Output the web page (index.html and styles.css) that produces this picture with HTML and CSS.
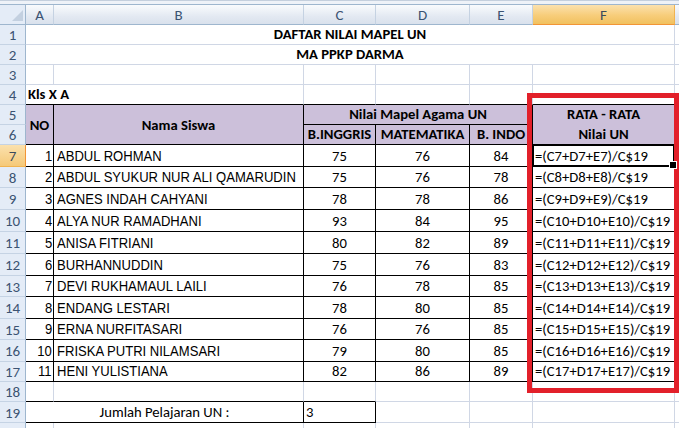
FILE: index.html
```html
<!DOCTYPE html>
<html>
<head>
<meta charset="utf-8">
<link rel="stylesheet" href="styles.css">
</head>
<body>
<div class="sheet">
  <div class="topbar"></div>
  <div class="grid">
    <div class="ch corner"><svg width="11" height="11" viewBox="0 0 11 11"><polygon points="11,0 11,11 0,11" fill="#c3d0e0"/></svg></div>
    <div class="ch">A</div>
    <div class="ch">B</div>
    <div class="ch">C</div>
    <div class="ch">D</div>
    <div class="ch">E</div>
    <div class="ch selh">F</div>
    <div class="ch last"></div>

    <div class="rh">1</div>
    <div class="c s6 title">DAFTAR NILAI MAPEL UN</div>
    <div class="c g"></div>

    <div class="rh">2</div>
    <div class="c s6 title">MA PPKP DARMA</div>
    <div class="c g"></div>

    <div class="rh">3</div>
    <div class="c"></div><div class="c"></div><div class="c"></div><div class="c"></div><div class="c"></div><div class="c"></div><div class="c g"></div>

    <div class="rh">4</div>
    <div class="c s2 kb bold">Kls X A</div>
    <div class="c kb"></div><div class="c kb"></div><div class="c kb"></div><div class="c kb"></div><div class="c g"></div>

    <div class="rh">5</div>
    <div class="c hd k r2">NO</div>
    <div class="c hd k r2">Nama Siswa</div>
    <div class="c hd k s3 sub">Nilai Mapel Agama UN</div>
    <div class="c hd kr sub nb">RATA - RATA</div>
    <div class="c g"></div>

    <div class="rh">6</div>
    <div class="c hd k sub2">B.INGGRIS</div>
    <div class="c hd k sub2">MATEMATIKA</div>
    <div class="c hd k sub2">B. INDO</div>
    <div class="c hd k sub2">Nilai UN</div>
    <div class="c g"></div>

    <div class="rh selr">7</div>
    <div class="c k no"><span>1</span></div><div class="c k nm"><span>ABDUL ROHMAN</span></div>
    <div class="c k num">75</div><div class="c k num">76</div><div class="c k num">84</div>
    <div class="c k fx active">=(C7+D7+E7)/C$19</div><div class="c g"></div>

    <div class="rh">8</div>
    <div class="c k no"><span>2</span></div><div class="c k nm"><span>ABDUL SYUKUR NUR ALI QAMARUDIN</span></div>
    <div class="c k num">75</div><div class="c k num">76</div><div class="c k num">78</div>
    <div class="c k fx">=(C8+D8+E8)/C$19</div><div class="c g"></div>

    <div class="rh">9</div>
    <div class="c k no"><span>3</span></div><div class="c k nm"><span>AGNES INDAH CAHYANI</span></div>
    <div class="c k num">78</div><div class="c k num">78</div><div class="c k num">86</div>
    <div class="c k fx">=(C9+D9+E9)/C$19</div><div class="c g"></div>

    <div class="rh">10</div>
    <div class="c k no"><span>4</span></div><div class="c k nm"><span>ALYA NUR RAMADHANI</span></div>
    <div class="c k num">93</div><div class="c k num">84</div><div class="c k num">95</div>
    <div class="c k fx">=(C10+D10+E10)/C$19</div><div class="c g"></div>

    <div class="rh">11</div>
    <div class="c k no"><span>5</span></div><div class="c k nm"><span>ANISA FITRIANI</span></div>
    <div class="c k num">80</div><div class="c k num">82</div><div class="c k num">89</div>
    <div class="c k fx">=(C11+D11+E11)/C$19</div><div class="c g"></div>

    <div class="rh">12</div>
    <div class="c k no"><span>6</span></div><div class="c k nm"><span>BURHANNUDDIN</span></div>
    <div class="c k num">75</div><div class="c k num">76</div><div class="c k num">83</div>
    <div class="c k fx">=(C12+D12+E12)/C$19</div><div class="c g"></div>

    <div class="rh">13</div>
    <div class="c k no"><span>7</span></div><div class="c k nm"><span>DEVI RUKHAMAUL LAILI</span></div>
    <div class="c k num">76</div><div class="c k num">78</div><div class="c k num">85</div>
    <div class="c k fx">=(C13+D13+E13)/C$19</div><div class="c g"></div>

    <div class="rh">14</div>
    <div class="c k no"><span>8</span></div><div class="c k nm"><span>ENDANG LESTARI</span></div>
    <div class="c k num">78</div><div class="c k num">80</div><div class="c k num">85</div>
    <div class="c k fx">=(C14+D14+E14)/C$19</div><div class="c g"></div>

    <div class="rh">15</div>
    <div class="c k no"><span>9</span></div><div class="c k nm"><span>ERNA NURFITASARI</span></div>
    <div class="c k num">76</div><div class="c k num">76</div><div class="c k num">85</div>
    <div class="c k fx">=(C15+D15+E15)/C$19</div><div class="c g"></div>

    <div class="rh">16</div>
    <div class="c k no"><span>10</span></div><div class="c k nm"><span>FRISKA PUTRI NILAMSARI</span></div>
    <div class="c k num">79</div><div class="c k num">80</div><div class="c k num">85</div>
    <div class="c k fx">=(C16+D16+E16)/C$19</div><div class="c g"></div>

    <div class="rh">17</div>
    <div class="c k no"><span>11</span></div><div class="c k nm"><span>HENI YULISTIANA</span></div>
    <div class="c k num">82</div><div class="c k num">86</div><div class="c k num">89</div>
    <div class="c k fx">=(C17+D17+E17)/C$19</div><div class="c g"></div>

    <div class="rh">18</div>
    <div class="c kb"></div><div class="c kb"></div><div class="c kb"></div><div class="c"></div><div class="c"></div><div class="c"></div><div class="c g"></div>

    <div class="rh">19</div>
    <div class="c s2 k lbl">Jumlah Pelajaran UN :</div>
    <div class="c k val">3</div>
    <div class="c"></div><div class="c"></div><div class="c"></div><div class="c g"></div>

    <div class="rh"></div>
    <div class="c"></div><div class="c"></div><div class="c"></div><div class="c"></div><div class="c"></div><div class="c"></div><div class="c g"></div>
  </div>
  <div class="redbox"></div>
</div>
</body>
</html>
```

FILE: styles.css
```css
* { box-sizing: border-box; margin: 0; padding: 0; }
html, body { width: 679px; height: 428px; overflow: hidden; background: #fff; }
body { font-family: Carlito, Calibri, Lato, "Liberation Sans", sans-serif; font-size: 14.67px; color: #000; }

.sheet { position: relative; width: 679px; }

.topbar { height: 5px; background: #eef2f8; border-top: 1px solid #c4cfdd; border-bottom: 1px solid #9eb6ce; }

.grid {
  display: grid;
  grid-template-columns: 26px 28px 250px 72px 94px 63px 142px 4px;
  grid-template-rows: 20px 20px 20px 20px 20px 20px 20px 22px 21px 22px 22px 22px 22px 21px 22px 21px 22px 20px 20px 21px 20px;
}

.c {
  display: flex;
  align-items: flex-end;
  border-right: 1px solid #d0d7e5;
  border-bottom: 1px solid #d0d7e5;
  padding: 0 2px 2px 2px;
  line-height: 16px;
  white-space: nowrap;
  overflow: hidden;
}
.c.g { border-right: none; }

.ch {
  display: flex;
  align-items: center;
  justify-content: center;
  background: linear-gradient(#f9fbfd, #e3e9f2 60%, #d9e1ec);
  border-right: 1px solid #c5d2e2;
  border-bottom: 1px solid #9eb6ce;
  color: #3b5372;
  font-size: 15px;
}
.ch.corner { justify-content: flex-end; align-items: flex-end; padding: 0 2px 3px 0; background: #e4ecf7; border-right: 1px solid #9eb6ce; }
.ch.selh { background: linear-gradient(#fbe1ae, #f7cd7a 55%, #f1c15f); border-bottom-color: #f29536; border-right-color: #f0b350; color: #3b4a5c; }
.ch.last { border-right: none; }

.rh {
  display: flex;
  align-items: center;
  justify-content: center;
  background: #e4ecf7;
  border-right: 1px solid #9eb6ce;
  border-bottom: 1px solid #c5d3e4;
  color: #3b5372;
  font-size: 15px;
  padding-top: 1px;
}
.rh.selr { background: linear-gradient(#fbe1ae, #f5c978); border-right-color: #f29536; border-bottom-color: #f0b350; color: #3b4a5c; }

.s6 { grid-column: span 6; }
.s3 { grid-column: span 3; }
.s2 { grid-column: span 2; }
.r2 { grid-row: span 2; }

.title { justify-content: center; font-weight: bold; padding-bottom: 2px; }
.bold { font-weight: bold; }

.k { border-right-color: #000; border-bottom-color: #000; }
.kb { border-bottom-color: #000; }
.kr { border-right-color: #000; }

.hd { background: #ccc0da; font-weight: bold; justify-content: center; align-items: center; padding: 0; }
.hd.sub { align-items: flex-end; padding-bottom: 2px; }
.hd.sub2 { align-items: flex-end; padding-bottom: 2px; }
.hd.nb { border-bottom-color: #ccc0da; }

.no, .nm { font-family: "Liberation Sans", Arial, sans-serif; font-size: 15px; padding-bottom: 2px; }
.no { justify-content: flex-end; padding-right: 1px; }
.no span { display: inline-block; transform: scaleX(0.87); transform-origin: right bottom; }
.nm { padding-left: 3px; }
.nm span { display: inline-block; transform: scaleX(0.87); transform-origin: left bottom; }
.num { justify-content: center; padding-bottom: 2px; }
.fx { padding-left: 2px; padding-bottom: 2px; }

.active { position: relative; overflow: visible; }
.active::after {
  content: "";
  position: absolute;
  left: -1px; top: -1px; right: -1px; bottom: -1px;
  border: 2px solid #000;
}
.active::before {
  content: "";
  position: absolute;
  right: -3px; bottom: -3px;
  width: 6px; height: 6px;
  background: #000;
  border: 1px solid #fff;
  z-index: 2;
}

.lbl { justify-content: center; padding-bottom: 2px; }
.val { padding-left: 2px; padding-bottom: 2px; }

.redbox {
  position: absolute;
  left: 527px;
  top: 93px;
  width: 152px;
  height: 300px;
  border: 5px solid #e2202a;
  pointer-events: none;
}
```
